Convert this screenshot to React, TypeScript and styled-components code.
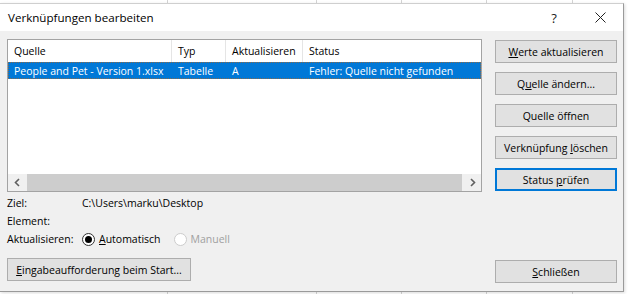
import styled, { createGlobalStyle } from "styled-components";

const GlobalStyle = createGlobalStyle`
  html, body {
    margin: 0;
    padding: 0;
    background: #ffffff;
  }
  body {
    font-family: "Open Sans", "Noto Sans", sans-serif;
    font-size: 10.5px;
    color: #000;
  }
`;

const Sheet = styled.div`
  width: 628px;
  height: 294px;
  overflow: hidden;
  background-color: #ffffff;
  background-image:
    linear-gradient(#d4d4d4, #d4d4d4),
    linear-gradient(#d4d4d4, #d4d4d4),
    linear-gradient(#d4d4d4, #d4d4d4),
    linear-gradient(#d4d4d4, #d4d4d4),
    linear-gradient(#d4d4d4, #d4d4d4);
  background-size: 1px 100%;
  background-repeat: no-repeat;
  background-position: 167px 0, 316px 0, 401px 0, 486px 0, 572px 0;
  padding-top: 3px;
  box-sizing: border-box;
`;

const Dialog = styled.div`
  width: 624px;
  height: 289px;
  box-sizing: border-box;
  border-top: 1px solid #cfcfcf;
  border-right: 1px solid #9a9a9a;
  border-bottom: 1px solid #9a9a9a;
  background: #f0f0f0;
  box-shadow: 1px 1px 3px rgba(0, 0, 0, 0.15);
  display: flex;
  flex-direction: column;
`;

const TitleBar = styled.div`
  height: 27px;
  background: #ffffff;
  display: flex;
  align-items: center;
  padding-left: 8px;
  flex-shrink: 0;
`;

const Title = styled.div`
  flex: 1;
  font-size: 11.6px;
  color: #000;
`;

const TitleButton = styled.div<{ $w: number }>`
  width: ${(p) => p.$w}px;
  height: 27px;
  display: flex;
  align-items: center;
  justify-content: center;
  color: #222;
  font-size: 13px;
`;

const Body = styled.div`
  flex: 1;
  display: grid;
  grid-template-columns: 475px 122px;
  column-gap: 13px;
  padding: 8px 0 8px 7px;
`;

const LeftCol = styled.div`
  display: flex;
  flex-direction: column;
`;

const RightCol = styled.div`
  display: flex;
  flex-direction: column;
  padding-top: 1px;
`;

const ListBox = styled.div`
  height: 153px;
  box-sizing: border-box;
  border: 1px solid #a3a3a3;
  background: #ffffff;
  display: flex;
  flex-direction: column;
`;

const cols = "164px 54px 77px 1fr";

const HeaderRow = styled.div`
  display: grid;
  grid-template-columns: ${cols};
  height: 22px;
`;

const HeaderCell = styled.div`
  display: flex;
  align-items: center;
  padding-left: 6px;
  border-right: 1px solid #e5e5e5;
  &:last-child {
    border-right: none;
  }
`;

const DataRow = styled.div<{ $selected?: boolean }>`
  display: grid;
  grid-template-columns: ${cols};
  height: 17px;
  box-sizing: border-box;
  background: ${(p) => (p.$selected ? "#0078d7" : "transparent")};
  color: ${(p) => (p.$selected ? "#ffffff" : "#000")};
  border: 1px dotted ${(p) => (p.$selected ? "#8a6a4a" : "transparent")};
`;

const DataCell = styled.div`
  display: flex;
  align-items: center;
  padding-left: 5px;
  white-space: nowrap;
`;

const ListSpace = styled.div`
  flex: 1;
`;

const HScroll = styled.div`
  height: 17px;
  display: flex;
  background: #f0f0f0;
`;

const ScrollArrow = styled.div`
  width: 17px;
  display: flex;
  align-items: center;
  justify-content: center;
`;

const ScrollTrack = styled.div`
  flex: 1;
  padding: 0 2px;
  display: flex;
`;

const ScrollThumb = styled.div`
  flex: 1;
  background: #cdcdcd;
`;

const InfoGrid = styled.div`
  margin-top: 2px;
  display: grid;
  grid-template-columns: 75px 1fr;
  grid-auto-rows: 18px;
  align-items: center;
`;

const FullRow = styled.span`
  grid-column: 1 / -1;
`;

const RadioGroup = styled.div`
  display: flex;
  align-items: center;
`;

const RadioLabel = styled.label<{ $disabled?: boolean }>`
  display: flex;
  align-items: center;
  gap: 4px;
  margin-right: 13px;
  color: ${(p) => (p.$disabled ? "#a0a0a0" : "#000")};
`;

const RadioCircle = styled.span<{ $checked?: boolean; $disabled?: boolean }>`
  width: 13px;
  height: 13px;
  box-sizing: border-box;
  border-radius: 50%;
  border: 1px solid ${(p) => (p.$disabled ? "#cccccc" : "#333333")};
  background: #ffffff;
  display: flex;
  align-items: center;
  justify-content: center;
  &::after {
    content: "";
    width: 7px;
    height: 7px;
    border-radius: 50%;
    background: #000;
    display: ${(p) => (p.$checked ? "block" : "none")};
  }
`;

const Button = styled.div<{ $default?: boolean; $width?: number }>`
  width: ${(p) => (p.$width ? `${p.$width}px` : "100%")};
  height: 23px;
  box-sizing: border-box;
  background: #e1e1e1;
  border: ${(p) => (p.$default ? "2px solid #0078d7" : "1px solid #adadad")};
  display: flex;
  align-items: center;
  justify-content: center;
  white-space: nowrap;
  margin-bottom: 9px;
`;

const BottomButton = styled(Button)`
  margin-top: 10px;
  margin-bottom: 0;
`;

const Spacer = styled.div`
  flex: 1;
`;

const U = styled.span`
  text-decoration: underline;
  text-underline-offset: 1px;
`;

const ChevronLeft = () => (
  <svg width="8" height="9" viewBox="0 0 8 9">
    <path d="M6 1 L2.5 4.5 L6 8" fill="none" stroke="#606060" strokeWidth="1.6" />
  </svg>
);

const ChevronRight = () => (
  <svg width="8" height="9" viewBox="0 0 8 9">
    <path d="M2 1 L5.5 4.5 L2 8" fill="none" stroke="#606060" strokeWidth="1.6" />
  </svg>
);

const CloseIcon = () => (
  <svg width="11" height="11" viewBox="0 0 11 11">
    <path d="M0.5 0.5 L10.5 10.5 M10.5 0.5 L0.5 10.5" stroke="#222" strokeWidth="1" />
  </svg>
);

export default function App() {
  return (
    <>
      <GlobalStyle />
      <Sheet>
        <Dialog>
          <TitleBar>
            <Title>Verknüpfungen bearbeiten</Title>
            <TitleButton $w={46}>?</TitleButton>
            <TitleButton $w={46}>
              <CloseIcon />
            </TitleButton>
          </TitleBar>
          <Body>
            <LeftCol>
              <ListBox>
                <HeaderRow>
                  <HeaderCell>Quelle</HeaderCell>
                  <HeaderCell>Typ</HeaderCell>
                  <HeaderCell>Aktualisieren</HeaderCell>
                  <HeaderCell>Status</HeaderCell>
                </HeaderRow>
                <DataRow $selected>
                  <DataCell>People and Pet - Version 1.xlsx</DataCell>
                  <DataCell>Tabelle</DataCell>
                  <DataCell>A</DataCell>
                  <DataCell>Fehler: Quelle nicht gefunden</DataCell>
                </DataRow>
                <ListSpace />
                <HScroll>
                  <ScrollArrow>
                    <ChevronLeft />
                  </ScrollArrow>
                  <ScrollTrack>
                    <ScrollThumb />
                  </ScrollTrack>
                  <ScrollArrow>
                    <ChevronRight />
                  </ScrollArrow>
                </HScroll>
              </ListBox>
              <InfoGrid>
                <span>Ziel:</span>
                <span>C:\Users\marku\Desktop</span>
                <FullRow>Element:</FullRow>
                <span>Aktualisieren:</span>
                <RadioGroup>
                  <RadioLabel>
                    <RadioCircle $checked />
                    <span>
                      <U>A</U>utomatisch
                    </span>
                  </RadioLabel>
                  <RadioLabel $disabled>
                    <RadioCircle $disabled />
                    <span>Manuell</span>
                  </RadioLabel>
                </RadioGroup>
              </InfoGrid>
              <BottomButton $width={184}>
                <span>
                  <U>E</U>ingabeaufforderung beim Start...
                </span>
              </BottomButton>
            </LeftCol>
            <RightCol>
              <Button>
                <span>
                  <U>W</U>erte aktualisieren
                </span>
              </Button>
              <Button>
                <span>
                  Q<U>u</U>elle ändern...
                </span>
              </Button>
              <Button>
                <span>
                  Quelle öf<U>f</U>nen
                </span>
              </Button>
              <Button>
                <span>
                  Verknüpfung <U>l</U>öschen
                </span>
              </Button>
              <Button $default>
                <span>
                  Status <U>p</U>rüfen
                </span>
              </Button>
              <Spacer />
              <BottomButton>
                <span>
                  <U>S</U>chließen
                </span>
              </BottomButton>
            </RightCol>
          </Body>
        </Dialog>
      </Sheet>
    </>
  );
}
